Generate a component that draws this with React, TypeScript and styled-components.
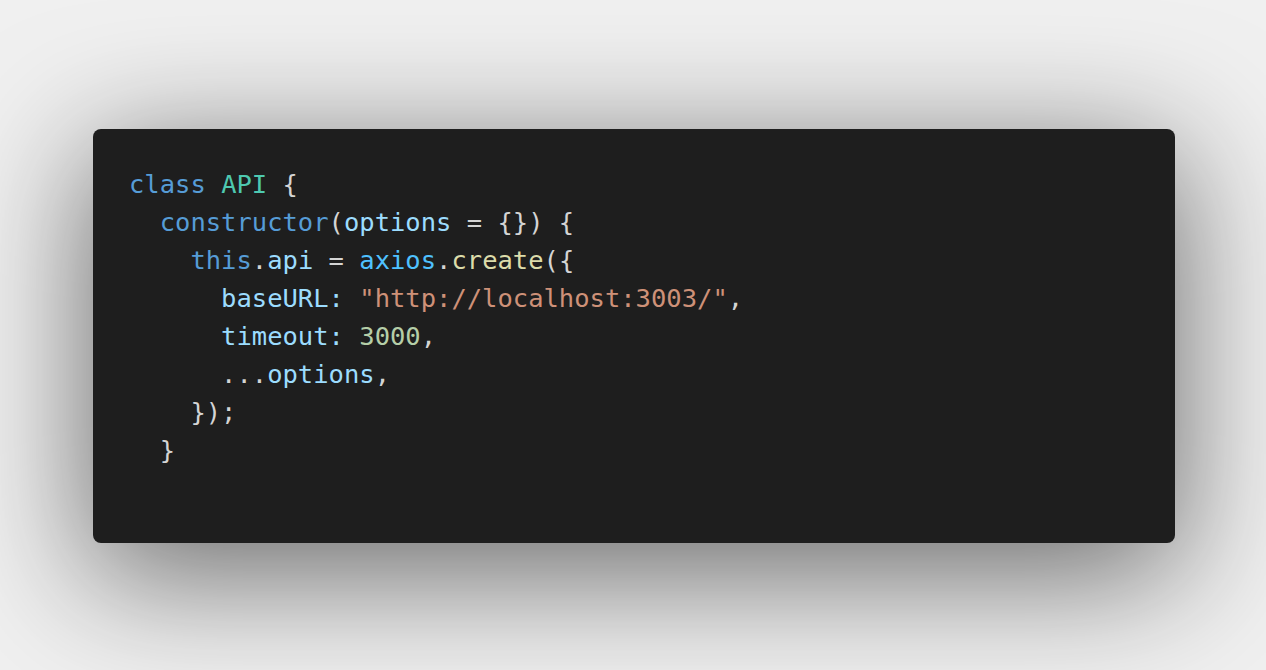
import React from "react";
import styled, { createGlobalStyle } from "styled-components";

const Global = createGlobalStyle`
  html, body { margin: 0; padding: 0; }
  body {
    background: #f0f0f0;
    font-family: "DejaVu Sans Mono", "Liberation Mono", monospace;
  }
`;

const Page = styled.div`
  width: 1266px;
  height: 670px;
  box-sizing: border-box;
  padding: 2px 0 0 2px;
  display: flex;
  align-items: center;
  justify-content: center;
  background: #f0f0f0;
  overflow: hidden;
`;

const Card = styled.pre`
  margin: 0;
  width: 1082px;
  box-sizing: border-box;
  padding: 36px;
  background: #1e1e1e;
  border-radius: 8px;
  box-shadow: 0 28px 130px 6px rgba(0, 0, 0, 0.55);
  font-family: "DejaVu Sans Mono", "Liberation Mono", monospace;
  font-size: 25.5px;
  line-height: 38px;
  color: #d4d4d4;
`;

const Line = styled.div<{ $indent: number }>`
  height: 38px;
  white-space: pre;
  padding-left: ${(p) => p.$indent * 2 * 15.35}px;
`;

type Kind = "kw" | "cls" | "p" | "v" | "fn" | "str" | "num" | "const";

const colors: Record<Kind, string> = {
  kw: "#569cd6",
  cls: "#4ec9b0",
  p: "#d4d4d4",
  v: "#9cdcfe",
  fn: "#dcdcaa",
  str: "#ce9178",
  num: "#b5cea8",
  const: "#4fc1ff",
};

const Tok = styled.span<{ $k: Kind }>`
  color: ${(p) => colors[p.$k]};
`;

const lines: { indent: number; toks: [Kind, string][] }[] = [
  { indent: 0, toks: [["kw", "class"], ["p", " "], ["cls", "API"], ["p", " {"]] },
  { indent: 1, toks: [["kw", "constructor"], ["p", "("], ["v", "options"], ["p", " = {}) {"]] },
  {
    indent: 2,
    toks: [["kw", "this"], ["p", "."], ["v", "api"], ["p", " = "], ["const", "axios"], ["p", "."], ["fn", "create"], ["p", "({"]],
  },
  { indent: 3, toks: [["v", "baseURL"], ["v", ":"], ["p", " "], ["str", "\"http://localhost:3003/\""], ["p", ","]] },
  { indent: 3, toks: [["v", "timeout"], ["v", ":"], ["p", " "], ["num", "3000"], ["p", ","]] },
  { indent: 3, toks: [["p", "..."], ["v", "options"], ["p", ","]] },
  { indent: 2, toks: [["p", "});"]] },
  { indent: 1, toks: [["p", "}"]] },
  { indent: 0, toks: [] },
];

export default function App() {
  return (
    <>
      <Global />
      <Page>
        <Card>
          {lines.map((l, i) => (
            <Line key={i} $indent={l.indent}>
              {l.toks.map(([k, t], j) => (
                <Tok key={j} $k={k}>
                  {t}
                </Tok>
              ))}
            </Line>
          ))}
        </Card>
      </Page>
    </>
  );
}
